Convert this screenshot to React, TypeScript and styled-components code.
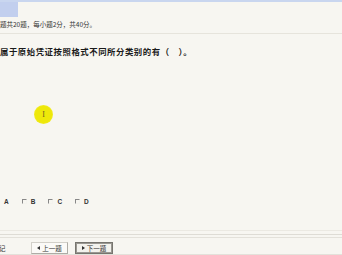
import React from "react";
import styled, { createGlobalStyle } from "styled-components";

const Global = createGlobalStyle`
  html, body { margin: 0; padding: 0; background: #f7f6f1; }
  body { width: 342px; height: 255px; overflow: hidden; font-family: "Noto Sans CJK SC", "Liberation Sans", sans-serif; }
`;

const Page = styled.div`
  width: 342px;
  height: 255px;
  display: flex;
  flex-direction: column;
  background: #f7f6f1;
  color: #222;
`;

const TopStripe = styled.div`
  height: 2px;
  background: #c9d6ef;
`;

const TabRow = styled.div`
  height: 15px;
  display: flex;
  background: #f7f6f1;
`;

const Tab = styled.div`
  width: 18px;
  background: #c2cfee;
`;

const Info = styled.div`
  height: 17px;
  box-sizing: border-box;
  padding-top: 4px;
  font-size: 6.5px;
  line-height: 7px;
  color: #333;
  white-space: nowrap;
  border-bottom: 1px solid #e6e4dc;
`;

const Content = styled.div`
  position: relative;
  flex: 1;
  display: flex;
  flex-direction: column;
`;

const Question = styled.div`
  margin-top: 12px;
  font-size: 8.4px;
  font-weight: 700;
  line-height: 10px;
  color: #1a1a1a;
  white-space: nowrap;
  letter-spacing: 0.55px;
`;

const Marker = styled.div`
  position: absolute;
  left: 34px;
  top: 71px;
  width: 19px;
  height: 19px;
  border-radius: 50%;
  background: radial-gradient(circle, #eee80a 60%, #f2ee40 80%, rgba(245,242,120,0.6) 100%);
  display: flex;
  align-items: center;
  justify-content: center;
  font-family: "Liberation Serif", serif;
  font-size: 8px;
  color: #6b6520;
`;

const Options = styled.div`
  margin-top: auto;
  margin-bottom: 25px;
  display: flex;
  align-items: center;
  font-size: 6.5px;
  font-weight: 700;
  color: #333;
  font-family: "Liberation Sans", sans-serif;
`;

const Opt = styled.label<{ $first?: boolean }>`
  display: flex;
  align-items: center;
  gap: 4px;
  margin-left: ${(p) => (p.$first ? "4px" : "13px")};
`;

const Box = styled.span`
  width: 5px;
  height: 5px;
  box-sizing: border-box;
  border-top: 1px solid #888;
  border-left: 1px solid #888;
  border-right: 1px solid #f4f3ee;
  border-bottom: 1px solid #f4f3ee;
`;

const Bottom = styled.div`
  display: flex;
  flex-direction: column;
`;

const Rule = styled.div<{ $c: string; $gap: number }>`
  height: 1px;
  background: ${(p) => p.$c};
  margin-bottom: ${(p) => p.$gap}px;
`;

const Toolbar = styled.div`
  height: 16px;
  display: flex;
  align-items: center;
  gap: 7px;
  padding-top: 3px;
  box-sizing: border-box;
  font-size: 7px;
  color: #333;
`;

const Mark = styled.span`
  width: 25px;
  font-size: 6.5px;
  margin-left: -1px;
`;

const Btn = styled.button<{ $active?: boolean }>`
  height: 12px;
  width: ${(p) => (p.$active ? "38px" : "37px")};
  padding: 0;
  display: flex;
  align-items: center;
  justify-content: center;
  gap: 2px;
  font-family: "Noto Sans CJK SC", sans-serif;
  font-size: 6.5px;
  color: #333;
  background: ${(p) => (p.$active ? "#f3f2ed" : "#fbfaf7")};
  border: 1px solid #d2d0c9;
  border-right-color: #aeaca6;
  border-bottom-color: #aeaca6;
  box-shadow: ${(p) => (p.$active ? "inset 0 0 0 1px #9a9892" : "none")};
  ${(p) => (p.$active ? "border-color: #77756f;" : "")}
`;

const Tri = styled.span<{ $dir: "l" | "r" }>`
  width: 0;
  height: 0;
  border-top: 2px solid transparent;
  border-bottom: 2px solid transparent;
  ${(p) => (p.$dir === "l" ? "border-right: 3px solid #333;" : "border-left: 3px solid #333;")}
`;

export default function App() {
  return (
    <Page>
      <Global />
      <TopStripe />
      <TabRow>
        <Tab />
      </TabRow>
      <Info>题共20题，每小题2分，共40分。</Info>
      <Content>
        <Question>属于原始凭证按照格式不同所分类别的有（　）。</Question>
        <Marker>I</Marker>
        <Options>
          <Opt $first>A</Opt>
          <Opt><Box />B</Opt>
          <Opt><Box />C</Opt>
          <Opt><Box />D</Opt>
        </Options>
      </Content>
      <Bottom>
        <Rule $c="#ebe9e2" $gap={3} />
        <Rule $c="#dedcd5" $gap={2} />
        <Rule $c="#e3e1da" $gap={0} />
        <Toolbar>
          <Mark>记</Mark>
          <Btn><Tri $dir="l" />上一题</Btn>
          <Btn $active><Tri $dir="r" />下一题</Btn>
        </Toolbar>
        <Rule $c="#e3e1da" $gap={0} />
      </Bottom>
    </Page>
  );
}
